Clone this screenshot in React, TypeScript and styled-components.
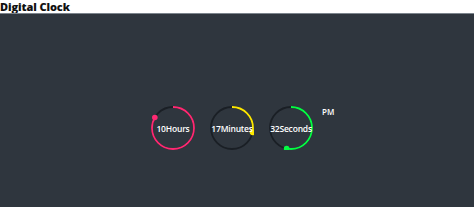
import styled, { createGlobalStyle } from "styled-components";

const GlobalStyle = createGlobalStyle`
  html, body {
    margin: 0;
    padding: 0;
    background: #ffffff;
    font-family: "Open Sans", "Liberation Sans", sans-serif;
  }
`;

const Page = styled.div`
  display: flex;
  flex-direction: column;
  height: 207px;
`;

const Title = styled.h1`
  margin: 0;
  padding-top: 1px;
  height: 12px;
  font-size: 11px;
  line-height: 12px;
  font-weight: 800;
  color: #111111;
  letter-spacing: -0.1px;
`;

const Panel = styled.div`
  flex: 1;
  background: #2f363e;
  border-top: 1px solid #7c848c;
  padding: 92px 0 0 151px;
`;

const Row = styled.div`
  display: flex;
  align-items: flex-start;
  gap: 15px;
`;

const Dial = styled.div`
  position: relative;
  width: 44px;
  height: 44px;
  display: flex;
  align-items: center;
  justify-content: center;
`;

const Ring = styled.svg`
  position: absolute;
  inset: 0;
`;

const Label = styled.span`
  position: relative;
  color: #ffffff;
  font-size: 8.5px;
  font-weight: 600;
  letter-spacing: -0.2px;
`;

const Meridiem = styled.span`
  color: #ffffff;
  font-size: 8px;
  font-weight: 600;
  margin: 0 0 0 -6px;
`;

type Props = { value: number; max: number; unit: string; color: string };

const Clock = ({ value, max, unit, color }: Props) => {
  const r = 21;
  const c = 2 * Math.PI * r;
  const frac = value / max;
  const angle = frac * 2 * Math.PI;
  const dx = 22 + r * Math.sin(angle);
  const dy = 22 - r * Math.cos(angle);
  return (
    <Dial>
      <Ring width="44" height="44" viewBox="0 0 44 44">
        <circle cx="22" cy="22" r={r} fill="none" stroke="#1a1f25" strokeWidth="1.8" />
        <circle
          cx="22"
          cy="22"
          r={r}
          fill="none"
          stroke={color}
          strokeWidth="1.8"
          strokeDasharray={`${c * frac} ${c}`}
          transform="rotate(-90 22 22)"
        />
        <circle cx={dx} cy={dy} r="2.8" fill={color} />
      </Ring>
      <Label>
        {value}
        {unit}
      </Label>
    </Dial>
  );
};

const App = () => {
  return (
    <>
      <GlobalStyle />
      <Page>
        <Title>Digital Clock</Title>
        <Panel>
          <Row>
            <Clock value={10} max={12} unit="Hours" color="#ff2972" />
            <Clock value={17} max={60} unit="Minutes" color="#fee800" />
            <Clock value={32} max={60} unit="Seconds" color="#04fc43" />
            <Meridiem>PM</Meridiem>
          </Row>
        </Panel>
      </Page>
    </>
  );
};

export default App;
